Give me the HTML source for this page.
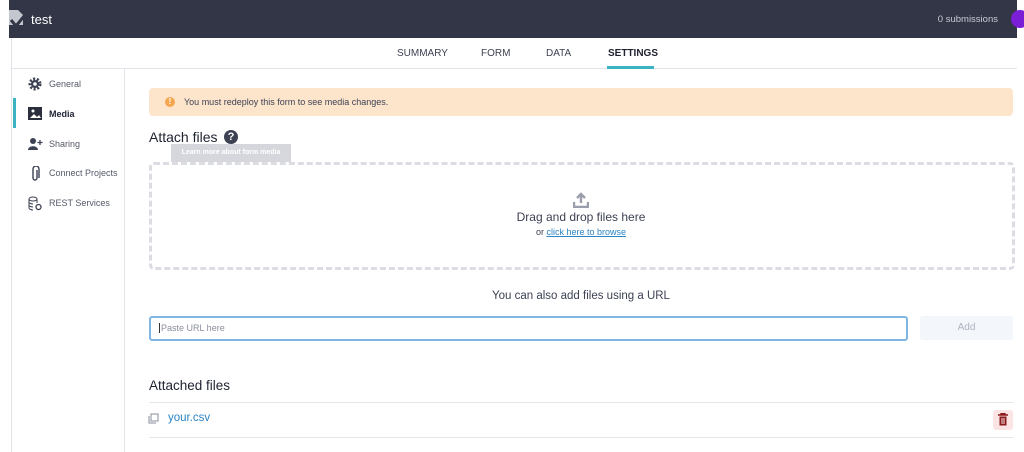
<!DOCTYPE html><html><head><style>
body{margin:0;width:1024px;height:452px;overflow:hidden;background:#fff;font-family:"Liberation Sans",sans-serif;position:relative;color:#3d4253}
.a{position:absolute;white-space:nowrap}
</style></head><body>
<div class="a" style="left:9px;top:0;width:1008px;height:38px;background:#323646"></div>
<svg class="a" style="left:5px;top:6px" width="22" height="24"><path d="M4 4h9l5 5v10H4z" fill="#c5c7cf"/><path d="M6 14l5 6 9-11" stroke="#323646" stroke-width="3" fill="none"/></svg>
<div class="a" style="left:31px;top:12px;color:#fff;font-size:13px">test</div>
<div class="a" style="left:898px;width:100px;text-align:right;top:14px;color:#c9ccd5;font-size:9.5px">0 submissions</div>
<div class="a" style="left:1011px;top:10px;width:18px;height:18px;border-radius:50%;background:#7b1fd6"></div>
<div class="a" style="left:11px;top:38px;width:1px;height:414px;background:#e2e3e8"></div>
<div class="a" style="left:12px;top:68px;width:1005px;height:1px;background:#e4e5ea"></div>
<div class="a" style="left:0;top:48px;width:1024px;font-size:10px;color:#3d4253">
<span class="a" style="left:397px">SUMMARY</span><span class="a" style="left:481px">FORM</span><span class="a" style="left:546px">DATA</span><span class="a" style="left:608px;font-weight:bold;color:#1e2231">SETTINGS</span></div>
<div class="a" style="left:607px;top:66px;width:47px;height:3px;background:#3ab4c1"></div>
<div class="a" style="left:124px;top:69px;width:1px;height:383px;background:#e4e5ea"></div>
<div class="a" style="left:13px;top:98px;width:3px;height:30px;background:#3ab4c1"></div>
<div class="a" style="font-size:9px;color:#555a68">
<svg class="a" style="left:28px;top:77px" width="14" height="14" viewBox="0 0 14 14"><circle cx="7" cy="7" r="5" fill="none" stroke="#3d4253" stroke-width="3" stroke-dasharray="2 1.6"/><circle cx="7" cy="7" r="4" fill="#3d4253"/><circle cx="7" cy="7" r="1.8" fill="#fff"/></svg>
<span class="a" style="left:49px;top:79px">General</span>
<svg class="a" style="left:28px;top:107px" width="14" height="13"><rect width="14" height="13" fill="#2b2f3d"/><path d="M2 11l4-4 3 3 2-2 2 3z" fill="#fff"/><circle cx="5" cy="4" r="1.5" fill="#fff"/></svg>
<span class="a" style="left:49px;top:109px;font-weight:bold;color:#1e2231">Media</span>
<svg class="a" style="left:28px;top:137px" width="15" height="14"><circle cx="5" cy="4" r="3" fill="#3d4253"/><path d="M0 13c0-5 10-5 10 0z" fill="#3d4253"/><path d="M12 3v5M9.5 5.5h5" stroke="#3d4253" stroke-width="1.3"/></svg>
<span class="a" style="left:49px;top:139px">Sharing</span>
<svg class="a" style="left:31px;top:166px" width="9" height="16"><path d="M6 4v8a2 2 0 01-4 0V3a3 3 0 016 0v9" fill="none" stroke="#3d4253" stroke-width="1.4"/></svg>
<span class="a" style="left:49px;top:168px">Connect Projects</span>
<svg class="a" style="left:28px;top:196px" width="14" height="15"><ellipse cx="5" cy="3" rx="4" ry="2" fill="none" stroke="#3d4253"/><path d="M1 3v9c0 1 2 2 4 2M9 3v4M1 6c0 1 2 2 4 2M1 9c0 1 2 2 4 2" fill="none" stroke="#3d4253"/><circle cx="10.5" cy="11" r="2.5" fill="none" stroke="#3d4253" stroke-width="1.3"/></svg>
<span class="a" style="left:49px;top:198px">REST Services</span>
</div>
<div class="a" style="left:149px;top:88px;width:864px;height:28px;background:#fde5cc;border-radius:4px"></div>
<div class="a" style="left:165px;top:97px;width:10px;height:10px;border-radius:50%;background:#f5a650;color:#fff;font-size:8px;text-align:center;line-height:10px;font-weight:bold">!</div>
<div class="a" style="left:184px;top:97px;font-size:9px;color:#3d4253">You must redeploy this form to see media changes.</div>
<div class="a" style="left:149px;top:129px;font-size:14px;color:#1e2231">Attach files</div>
<div class="a" style="left:224px;top:130px;width:14px;height:14px;border-radius:50%;background:#3d4253;color:#fff;font-size:11px;font-weight:bold;text-align:center;line-height:14px">?</div>
<div class="a" style="left:171px;top:144px;width:120px;height:18px;background:#d5d7dd;color:#fff;font-size:7px;text-align:center;line-height:17px;font-weight:bold">Learn more about form media</div>
<div class="a" style="left:149px;top:162px;width:860px;height:102px;border:3px dashed #dcdde2;border-radius:5px"></div>
<svg class="a" style="left:573px;top:192px" width="16" height="16"><path d="M8 2v9M4 6l4-4 4 4" stroke="#9a9dab" stroke-width="2.4" fill="none"/><path d="M1 10v5h14v-5" stroke="#9a9dab" stroke-width="2.4" fill="none"/></svg>
<div class="a" style="left:449px;top:210px;width:264px;text-align:center;font-size:12px;color:#3d4253">Drag and drop files here</div>
<div class="a" style="left:449px;top:227px;width:264px;text-align:center;font-size:9px;color:#3d4253">or <span style="color:#2b84c3;text-decoration:underline">click here to browse</span></div>
<div class="a" style="left:149px;top:290px;width:864px;text-align:center;font-size:11.5px;color:#3d4253">You can also add files using a URL</div>
<div class="a" style="left:149px;top:316px;width:747px;height:21px;border:2px solid #7fb6e3;border-radius:3px;font-size:9px;color:#8a8e9c;line-height:21px;padding-left:8px;box-sizing:content-box"><span style="border-left:1px solid #333;padding-left:1px">Paste URL here</span></div>
<div class="a" style="left:920px;top:316px;width:93px;height:24px;background:#f3f6fb;border-radius:3px;color:#aeb4c0;font-size:10px;text-align:center;line-height:24px">Add</div>
<div class="a" style="left:149px;top:378px;font-size:13.5px;color:#1e2231">Attached files</div>
<div class="a" style="left:149px;top:402px;width:864px;height:1px;background:#e4e5ea"></div>
<div class="a" style="left:149px;top:437px;width:864px;height:1px;background:#e4e5ea"></div>
<svg class="a" style="left:148px;top:413px" width="11" height="11"><rect x="3" y="1" width="7" height="7" fill="none" stroke="#8a8e9c"/><path d="M1 3v7h7" fill="none" stroke="#8a8e9c"/></svg>
<div class="a" style="left:168px;top:412px;font-size:11.5px;color:#2b84c3">your.csv</div>
<div class="a" style="left:993px;top:410px;width:20px;height:20px;background:#fbe4e4;border-radius:3px"></div>
<svg class="a" style="left:998px;top:413px" width="10" height="13"><path d="M0 2h10M3 2V0.5h4V2" stroke="#8b1a1a" stroke-width="1.4" fill="none"/><rect x="1.5" y="3.5" width="7" height="9" fill="#8b1a1a"/><path d="M4 5v6M6 5v6" stroke="#fbe4e4"/></svg>
</body></html>
